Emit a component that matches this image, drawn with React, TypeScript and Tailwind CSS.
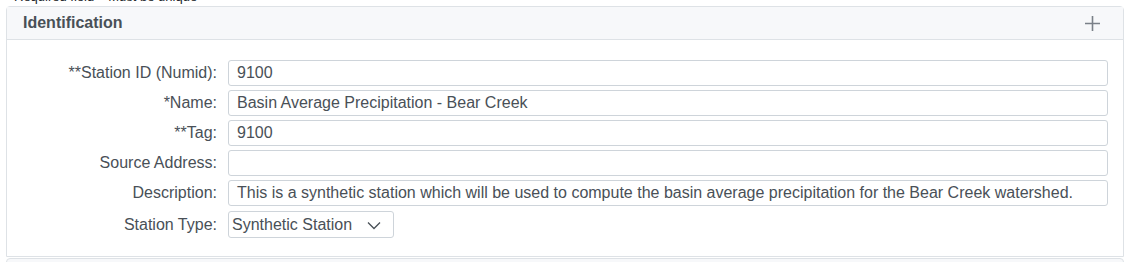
import React from 'react';

const font = { fontFamily: '"Liberation Sans", Arial, sans-serif' };

interface Field {
  label: string;
  value: string;
}

const fields: Field[] = [
  { label: '**Station ID (Numid):', value: '9100' },
  { label: '*Name:', value: 'Basin Average Precipitation - Bear Creek' },
  { label: '**Tag:', value: '9100' },
  { label: 'Source Address:', value: '' },
  {
    label: 'Description:',
    value:
      'This is a synthetic station which will be used to compute the basin average precipitation for the Bear Creek watershed.',
  },
];

export default function App() {
  return (
    <div className="w-[1133px] h-[262px] overflow-hidden bg-white text-[#495057]" style={font}>
      {/* legend, scrolled mostly out of view */}
      <div className="h-[6px] overflow-hidden">
        <div className="flex gap-[14px] pl-[14px] -mt-[11px] text-[13px] leading-[16px] text-[#212529]">
          <span>Required field</span>
          <span>Must be unique</span>
        </div>
      </div>

      <div className="ml-[6px] w-[1118px] border border-[#dee2e6] rounded-t-[4px]">
        <div className="h-[33px] flex items-center justify-between bg-[#f7f8fa] border-b border-[#dee2e6] pl-[16px] pr-[22px]">
          <span className="text-[16px] font-bold text-[#495057]">Identification</span>
          <svg width="17" height="17" viewBox="0 0 17 17" className="text-[#7a8088]">
            <path d="M8.5 1v15M1 8.5h15" stroke="currentColor" strokeWidth="1.6" fill="none" />
          </svg>
        </div>
        <div className="pt-[20px] pb-[18px] pr-[15px] flex flex-col gap-[4px]">
          {fields.map((f) => (
            <div key={f.label} className="flex items-center">
              <label className="w-[210px] text-right text-[16px]">{f.label}</label>
              <div className="ml-[11px] flex-1 h-[26px] border border-[#ced4da] rounded-[3px] px-[8px] flex items-center text-[16px] text-[#495057] whitespace-nowrap overflow-hidden">
                {f.value}
              </div>
            </div>
          ))}
          <div className="flex items-center mt-[1px]">
            <label className="w-[210px] text-right text-[16px]">Station Type:</label>
            <div className="ml-[11px] w-[166px] h-[27px] border border-[#ced4da] rounded-[3px] pl-[3px] pr-[11px] flex items-center justify-between text-[16px] text-[#495057]">
              <span>Synthetic Station</span>
              <svg width="16" height="16" viewBox="0 0 16 16">
                <path d="M2 5.5l6 6 6-6" stroke="#495057" strokeWidth="1.3" fill="none" />
              </svg>
            </div>
          </div>
        </div>
      </div>

      <div className="mt-[1px] ml-[6px] w-[1118px] h-[10px] border border-[#dee2e6] bg-[#f7f8fa] rounded-t-[4px]" />
    </div>
  );
}
